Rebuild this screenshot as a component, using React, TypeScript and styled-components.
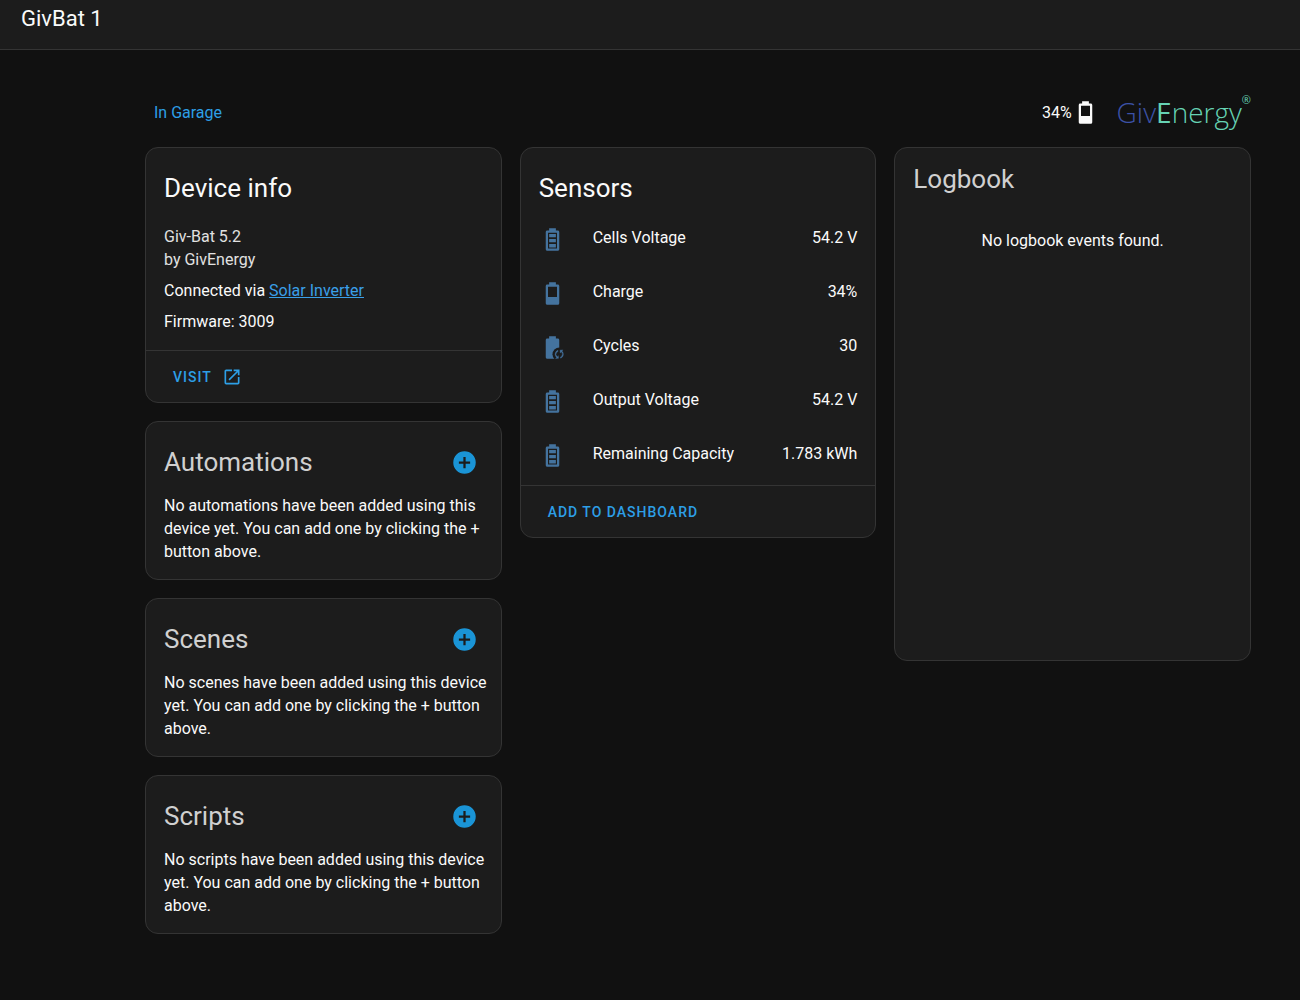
import React from "react";
import styled, { createGlobalStyle } from "styled-components";

const GlobalStyle = createGlobalStyle`
  *, *::before, *::after { box-sizing: border-box; }
  body {
    margin: 0;
    background: #111111;
    color: #fafafa;
    font-family: Roboto, "Noto Sans", sans-serif;
    font-size: 16px;
    line-height: 23px;
  }
  h1, h2, p, ul, dl, dd { margin: 0; padding: 0; }
`;

const TopBar = styled.header`
  height: 50px;
  padding: 5px 21px;
  background: #1c1c1c;
  border-bottom: 1px solid #343434;
`;

const PageTitle = styled.h1`
  font-size: 22px;
  font-weight: 400;
  line-height: 28px;
`;

const Main = styled.main`
  padding: 40px 49px 65px 145px;
`;

const InfoRow = styled.div`
  display: flex;
  align-items: center;
  justify-content: space-between;
  height: 44px;
  margin-bottom: 13px;
  padding-left: 9px;
`;

const Link = styled.a<{ $underline?: boolean }>`
  color: ${(p) => (p.$underline ? "#3a9fe8" : "#2d9fe6")};
  text-decoration: ${(p) => (p.$underline ? "underline" : "none")};
`;

const Status = styled.div`
  display: flex;
  align-items: center;
`;

const Logo = styled.span`
  display: flex;
  margin-left: 18px;
  font-family: "Open Sans", sans-serif;
  font-size: 28px;
  font-weight: 300;
  line-height: 42px;
  color: #66d3b4;
`;

const LogoGiv = styled.span`
  color: #3c52a6;
`;

const LogoE = styled.span`
  font-weight: 400;
`;

const LogoMark = styled.sup`
  font-size: 11px;
  font-weight: 400;
  line-height: 18px;
  vertical-align: top;
`;

const Columns = styled.div`
  display: grid;
  grid-template-columns: repeat(3, minmax(0, 1fr));
  gap: 18px;
  align-items: start;
`;

const Column = styled.div`
  display: grid;
  gap: 18px;
`;

const Card = styled.section`
  background: #1c1c1c;
  border: 1px solid #343434;
  border-radius: 13px;
  overflow: hidden;
`;

const CardHeader = styled.div<{ $compact?: boolean }>`
  display: flex;
  align-items: center;
  justify-content: space-between;
  padding: ${(p) => (p.$compact ? "13px 18px 0" : "22px 18px 0")};
`;

const CardTitle = styled.h2<{ $muted?: boolean }>`
  font-size: 26px;
  font-weight: 400;
  line-height: 36px;
  color: ${(p) => (p.$muted ? "#d0d0d0" : "#fafafa")};
`;

const DeviceBody = styled.div`
  display: grid;
  gap: 8px;
  padding: 19px 18px 17px;
`;

const Model = styled.div`
  color: #e1e1e1;
`;

const Message = styled.p`
  padding: 14px 12px 16px 18px;
`;

const CardActions = styled.div`
  display: flex;
  align-items: center;
  height: 52px;
  padding: 0 18px;
  border-top: 1px solid #343434;
`;

const TextButton = styled.button`
  display: inline-flex;
  align-items: center;
  gap: 10px;
  height: 40px;
  padding: 0 9px;
  border: 0;
  background: none;
  color: #2d9fe6;
  font: 500 14px/20px Roboto, sans-serif;
  letter-spacing: 1px;
  text-transform: uppercase;
  cursor: pointer;
`;

const IconButton = styled.button`
  display: grid;
  place-items: center;
  width: 36px;
  height: 36px;
  padding: 0;
  border: 0;
  background: none;
  color: #1a94d6;
  cursor: pointer;
`;

const SensorList = styled.dl`
  padding: 5px 18px 4px;
  line-height: 22px;
`;

const SensorRow = styled.div`
  display: grid;
  grid-template-columns: 27px 1fr auto;
  column-gap: 27px;
  align-items: center;
  height: 54px;
`;

const SensorIcon = styled.span`
  display: flex;
  padding-top: 2px;
  color: #44739e;
`;

const SensorValue = styled.dd`
  text-align: right;
`;

const LogbookBody = styled.div`
  min-height: 463px;
  padding: 32px 18px;
  text-align: center;
`;

const shell =
  "M16.67 4H15V2H9V4H7.33A1.33 1.33 0 0 0 6 5.33V20.67C6 21.4 6.6 22 7.33 22H16.67A1.33 1.33 0 0 0 18 20.67V5.33C18 4.6 17.4 4 16.67 4Z";

const paths = {
  high: "M16 20H8V6H16M16.67 4H15V2H9V4H7.33C6.6 4 6 4.6 6 5.33V20.67C6 21.4 6.6 22 7.33 22H16.67C17.41 22 18 21.41 18 20.67V5.33C18 4.6 17.4 4 16.67 4M15 16H9V19H15V16M15 7H9V10H15V7M15 11.5H9V14.5H15V11.5Z",
  low: "M16 15H8V6H16M16.67 4H15V2H9V4H7.33A1.33 1.33 0 0 0 6 5.33V20.67C6 21.4 6.6 22 7.33 22H16.67A1.33 1.33 0 0 0 18 20.67V5.33C18 4.6 17.4 4 16.67 4Z",
  open: "M14 3V5H17.59L7.76 14.83L9.17 16.24L19 6.41V10H21V3M19 19H5V5H12V3H5C3.89 3 3 3.9 3 5V19A2 2 0 0 0 5 21H19A2 2 0 0 0 21 19V12H19V19Z",
  plus: "M17 13H13V17H11V13H7V11H11V7H13V11H17M12 2A10 10 0 0 0 2 12A10 10 0 0 0 12 22A10 10 0 0 0 22 12A10 10 0 0 0 12 2Z",
  sync: "M12 18A6 6 0 0 1 6 12C6 11 6.25 10.03 6.7 9.2L5.24 7.74C4.46 8.97 4 10.43 4 12A8 8 0 0 0 12 20V23L16 19L12 15M12 4V1L8 5L12 9V6A6 6 0 0 1 18 12C18 13 17.75 13.97 17.3 14.8L18.76 16.26C19.54 15.03 20 13.57 20 12A8 8 0 0 0 12 4Z",
};

type IconName = "high" | "low" | "cycle" | "open" | "plus";

function Icon({ name, size = 27 }: { name: IconName; size?: number }) {
  return (
    <svg width={size} height={size} viewBox="0 0 24 24" fill="currentColor" aria-hidden="true">
      {name === "cycle" ? (
        <>
          <mask id="cycle-cutout">
            <rect width="24" height="24" fill="white" />
            <circle cx="18" cy="18" r="6" fill="black" />
          </mask>
          <path d={shell} mask="url(#cycle-cutout)" />
          <path
            d={paths.sync}
            stroke="currentColor"
            strokeWidth="0.6"
            transform="translate(18 18) rotate(40) scale(0.46) translate(-12 -12)"
          />
        </>
      ) : (
        <path d={paths[name]} />
      )}
    </svg>
  );
}

const sensors: { icon: IconName; name: string; value: string }[] = [
  { icon: "high", name: "Cells Voltage", value: "54.2 V" },
  { icon: "low", name: "Charge", value: "34%" },
  { icon: "cycle", name: "Cycles", value: "30" },
  { icon: "high", name: "Output Voltage", value: "54.2 V" },
  { icon: "high", name: "Remaining Capacity", value: "1.783 kWh" },
];

const related = ["Automations", "Scenes", "Scripts"];

function RelatedCard({ title }: { title: string }) {
  const kind = title.toLowerCase();
  return (
    <Card>
      <CardHeader>
        <CardTitle $muted>{title}</CardTitle>
        <IconButton type="button" aria-label={`Add ${kind}`}>
          <Icon name="plus" />
        </IconButton>
      </CardHeader>
      <Message>
        {`No ${kind} have been added using this device yet. You can add one by clicking the + button above.`}
      </Message>
    </Card>
  );
}

export default function App() {
  return (
    <>
      <GlobalStyle />
      <TopBar>
        <PageTitle>GivBat 1</PageTitle>
      </TopBar>
      <Main>
        <InfoRow>
          <Link href="#garage">In Garage</Link>
          <Status>
            34%
            <Icon name="low" />
            <Logo>
              <LogoGiv>Giv</LogoGiv>
              <LogoE>E</LogoE>
              <span>nergy</span>
              <LogoMark>®</LogoMark>
            </Logo>
          </Status>
        </InfoRow>
        <Columns>
          <Column>
            <Card>
              <CardHeader>
                <CardTitle>Device info</CardTitle>
              </CardHeader>
              <DeviceBody>
                <Model>
                  <div>Giv-Bat 5.2</div>
                  <div>by GivEnergy</div>
                </Model>
                <div>
                  Connected via{" "}
                  <Link href="#inverter" $underline>
                    Solar Inverter
                  </Link>
                </div>
                <div>Firmware: 3009</div>
              </DeviceBody>
              <CardActions>
                <TextButton type="button">
                  Visit
                  <Icon name="open" size={20} />
                </TextButton>
              </CardActions>
            </Card>
            {related.map((title) => (
              <RelatedCard key={title} title={title} />
            ))}
          </Column>
          <Card>
            <CardHeader>
              <CardTitle>Sensors</CardTitle>
            </CardHeader>
            <SensorList>
              {sensors.map((s) => (
                <SensorRow key={s.name}>
                  <SensorIcon>
                    <Icon name={s.icon} />
                  </SensorIcon>
                  <dt>{s.name}</dt>
                  <SensorValue>{s.value}</SensorValue>
                </SensorRow>
              ))}
            </SensorList>
            <CardActions>
              <TextButton type="button">Add to dashboard</TextButton>
            </CardActions>
          </Card>
          <Card>
            <CardHeader $compact>
              <CardTitle $muted>Logbook</CardTitle>
            </CardHeader>
            <LogbookBody>No logbook events found.</LogbookBody>
          </Card>
        </Columns>
      </Main>
    </>
  );
}
